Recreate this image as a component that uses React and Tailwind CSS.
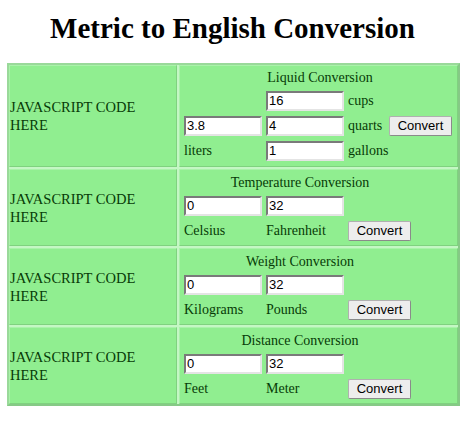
import React from 'react';

const serif = { fontFamily: '"Liberation Serif", "Times New Roman", serif' };

const Field = ({ value }) => (
  <input
    readOnly
    value={value}
    className="w-[78px] h-[20px] bg-white border-2 border-t-[#7a7a7a] border-l-[#7a7a7a] border-b-[#e4e4e4] border-r-[#e4e4e4] px-[1px] text-[13px] text-black outline-none font-['Liberation_Sans',Arial,sans-serif]"
  />
);

const ConvertButton = () => (
  <button className="w-[63px] h-[20px] bg-[#ededed] border border-[#b0b0b0] border-b-[#8a8a8a] border-r-[#8a8a8a] rounded-[2px] text-[13px] text-black font-['Liberation_Sans',Arial,sans-serif] leading-none">
    Convert
  </button>
);

const Cell = ({ children, className = "" }) => (
  <div className={`bg-[#90ee90] border border-[#7fd27f] border-t-[#a9f3a9] border-l-[#a9f3a9] ${className}`}>
    {children}
  </div>
);

const CodeCell = () => (
  <Cell className="flex items-center pr-4">
    <span className="text-[14.5px] leading-[18px]">JAVASCRIPT CODE HERE</span>
  </Cell>
);

const Title = ({ children }) => (
  <div className="h-[22px] flex items-center justify-center text-[14px]">{children}</div>
);

const pairs = [
  { title: "Temperature Conversion", a: "Celsius", b: "Fahrenheit" },
  { title: "Weight Conversion", a: "Kilograms", b: "Pounds" },
  { title: "Distance Conversion", a: "Feet", b: "Meter" },
];

export default function App() {
  return (
    <div className="w-[474px] h-[437px] bg-white text-[#073b07]" style={serif}>
      <h1 className="w-[465px] pt-[12px] h-[63px] text-center text-[29px] font-bold text-black leading-[32px]">
        Metric to English Conversion
      </h1>
      <div className="ml-[7px] w-[453px] border-2 border-[#86c986] border-t-[#9ad99a] border-l-[#9ad99a] bg-[#c4f7c4]">
        <div className="grid grid-cols-[168px_1fr] gap-[2px]">
          <CodeCell />
          <Cell className="pl-[4px] pb-[3px]">
            <div className="w-[272px]">
              <Title>Liquid Conversion</Title>
              <div className="grid grid-cols-[78px_78px_37px_64px] gap-x-[4px] auto-rows-[25px] items-center text-[14px]">
                <div />
                <Field value="16" />
                <span>cups</span>
                <div />
                <Field value="3.8" />
                <Field value="4" />
                <span>quarts</span>
                <ConvertButton />
                <span>liters</span>
                <Field value="1" />
                <span>gallons</span>
                <div />
              </div>
            </div>
          </Cell>
          {pairs.map((p) => (
            <React.Fragment key={p.title}>
              <CodeCell />
              <Cell className="pl-[4px] pt-[1px] pb-[2px]">
                <div className="w-[232px]">
                  <Title>{p.title}</Title>
                  <div className="grid grid-cols-[78px_78px_64px] gap-x-[4px] auto-rows-[25px] items-center text-[14px]">
                    <Field value="0" />
                    <Field value="32" />
                    <div />
                    <span>{p.a}</span>
                    <span>{p.b}</span>
                    <ConvertButton />
                  </div>
                </div>
              </Cell>
            </React.Fragment>
          ))}
        </div>
      </div>
    </div>
  );
}
